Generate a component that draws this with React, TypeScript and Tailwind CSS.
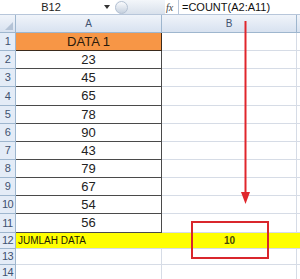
import React from "react";

const rows: { n: number; v: string; h: string }[] = [
  { n: 2, v: "23", h: "h-[18px]" },
  { n: 3, v: "45", h: "h-[18px]" },
  { n: 4, v: "65", h: "h-[19px]" },
  { n: 5, v: "78", h: "h-[18px]" },
  { n: 6, v: "90", h: "h-[18px]" },
  { n: 7, v: "43", h: "h-[18px]" },
  { n: 8, v: "79", h: "h-[18px]" },
  { n: 9, v: "67", h: "h-[18px]" },
  { n: 10, v: "54", h: "h-[18px]" },
  { n: 11, v: "56", h: "h-[19px]" },
];

function RowHead({ n }: { n: number }) {
  return (
    <div className="w-[16px] shrink-0 flex items-center justify-center bg-[#e4ecf7] border-r border-b border-[#9eb6ce] text-[11px] tracking-[-0.5px] text-[#3f5270]">
      {n}
    </div>
  );
}

export default function App() {
  return (
    <div
      className="relative w-[300px] h-[279px] overflow-hidden bg-white"
      style={{ fontFamily: '"Liberation Sans", Arial, sans-serif' }}
    >
      {/* Formula bar */}
      <div className="h-[15px] flex items-center bg-white border-b border-[#b7c6da]">
        <div className="w-[102px] text-center text-[11px] text-[#222]">B12</div>
        <svg width="6" height="4" className="ml-[2px]" viewBox="0 0 6 4">
          <path d="M0 0 L6 0 L3 4 Z" fill="#333" />
        </svg>
        <div className="ml-[5px] h-[14px] w-[50px] flex items-center bg-gradient-to-b from-[#f3f6fa] to-[#d9e1ec] rounded-l-full">
          <div className="w-[13px] h-[13px] rounded-full bg-gradient-to-b from-[#fafbfd] to-[#c6d1df] border border-[#b5c2d3]" />
        </div>
        <div className="w-[13px] text-[10px] italic text-[#444] pl-[1px]" style={{ fontFamily: '"Liberation Serif", serif' }}>
          fx
        </div>
        <div className="flex-1 h-full border-l border-[#b7c6da] pl-[3px] flex items-center text-[11px] text-[#111]">
          =COUNT(A2:A11)
        </div>
      </div>

      {/* Column headers */}
      <div className="h-[18px] flex bg-gradient-to-b from-[#f0f4fa] to-[#d8e2f0] border-b border-[#9eb6ce] text-[10px] text-[#3f5270]">
        <div className="w-[16px] shrink-0 border-r border-[#9eb6ce] relative">
          <svg width="8" height="8" viewBox="0 0 8 8" className="absolute right-[2px] bottom-[2px]">
            <path d="M8 0 L8 8 L0 8 Z" fill="#b4c3d6" />
          </svg>
        </div>
        <div className="w-[146px] shrink-0 border-r border-[#9eb6ce] flex items-center justify-center">A</div>
        <div className="w-[135px] shrink-0 border-r border-[#9eb6ce] flex items-center justify-center">B</div>
        <div className="flex-1" />
      </div>

      {/* Row 1 */}
      <div className="h-[18px] flex">
        <RowHead n={1} />
        <div className="w-[146px] shrink-0 bg-[#f79646] border-r border-b border-[#3a2a1c] flex items-center justify-center text-[13px] text-[#2a1a0c]">
          DATA 1
        </div>
        <div className="w-[135px] shrink-0 border-r border-b border-[#d6dce6]" />
        <div className="flex-1 border-b border-[#d6dce6]" />
      </div>

      {rows.map((r) => (
        <div key={r.n} className={`${r.h} flex`}>
          <RowHead n={r.n} />
          <div className="w-[146px] shrink-0 border-r border-b border-[#4a4a4a] flex items-center justify-center text-[13px] text-[#222]">
            {r.v}
          </div>
          <div className="w-[135px] shrink-0 border-r border-b border-[#d6dce6]" />
          <div className="flex-1 border-b border-[#d6dce6]" />
        </div>
      ))}

      {/* Row 12 */}
      <div className="h-[16px] flex">
        <RowHead n={12} />
        <div className="flex-1 flex bg-[#ffff00] border-b border-[#d6dce6]">
          <div className="w-[146px] shrink-0 flex items-center pl-[2px] text-[10px] text-[#1a1a00]">
            JUMLAH DATA
          </div>
          <div className="w-[135px] shrink-0 flex items-center justify-center text-[10px] font-bold text-[#4a4a00]">
            10
          </div>
        </div>
      </div>

      {/* Rows 13, 14 */}
      {[13, 14].map((n) => (
        <div key={n} className="h-[16px] flex">
          <RowHead n={n} />
          <div className="w-[146px] shrink-0 border-r border-b border-[#d6dce6]" />
          <div className="w-[135px] shrink-0 border-r border-b border-[#d6dce6]" />
          <div className="flex-1 border-b border-[#d6dce6]" />
        </div>
      ))}

      {/* Red annotation arrow */}
      <svg className="absolute left-0 top-0 pointer-events-none" width="300" height="279" viewBox="0 0 300 279">
        <line x1="245.5" y1="21" x2="245.5" y2="196" stroke="#e0262c" strokeWidth="2" />
        <path d="M241 192 L250 192 L245.5 204 Z" fill="#e0262c" />
      </svg>

      {/* Red highlight box */}
      <div className="absolute left-[191px] top-[221px] w-[78px] h-[38px] border-2 border-[#d9262c]" />
    </div>
  );
}
